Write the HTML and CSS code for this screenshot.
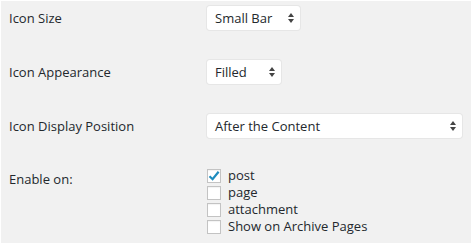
FILE: index.html
```html
<!DOCTYPE html>
<html>
  <head>
    <title>Icon Settings</title>
    <link rel="stylesheet" href="styles.css">
  </head>
  <body>
    <div class="panel">
      <div class="row">
        <div class="label">Icon Size</div>
        <div class="select size">
          <span>Small Bar</span>
          <svg class="arrows" width="6" height="10" viewBox="0 0 6 10"><path d="M3 0 L6 4 L0 4 Z M3 10 L6 6 L0 6 Z" fill="#444"/></svg>
        </div>
      </div>
      <div class="row">
        <div class="label">Icon Appearance</div>
        <div class="select look">
          <span>Filled</span>
          <svg class="arrows" width="6" height="10" viewBox="0 0 6 10"><path d="M3 0 L6 4 L0 4 Z M3 10 L6 6 L0 6 Z" fill="#444"/></svg>
        </div>
      </div>
      <div class="row">
        <div class="label">Icon Display Position</div>
        <div class="select place">
          <span>After the Content</span>
          <svg class="arrows" width="6" height="10" viewBox="0 0 6 10"><path d="M3 0 L6 4 L0 4 Z M3 10 L6 6 L0 6 Z" fill="#444"/></svg>
        </div>
      </div>
      <div class="row checks">
        <div class="label enable">Enable on:</div>
        <div class="checklist">
          <div class="check">
            <span class="box">
              <svg width="12" height="12" viewBox="0 0 12 12"><path d="M1.5 6.2 L4.6 9.2 L10.6 1.8" fill="none" stroke="#1e8cbe" stroke-width="2.2"/></svg>
            </span>
            <span>post</span>
          </div>
          <div class="check"><span class="box"></span><span>page</span></div>
          <div class="check"><span class="box"></span><span>attachment</span></div>
          <div class="check"><span class="box"></span><span>Show on Archive Pages</span></div>
        </div>
      </div>
    </div>
  </body>
</html>
```

FILE: styles.css
```css
body {
  margin: 0;
  background-color: #fff;
  font-family: "Open Sans", "Liberation Sans", sans-serif;
  color: #23282d;
}

.panel {
  background-color: #f1f1f1;
  margin: 1px 3px 2px 1px;
  height: 242px;
  padding: 5px 0 0 8px;
  box-sizing: border-box;
}

.row {
  display: flex;
  align-items: center;
  height: 24px;
  margin-bottom: 30px;
}

.label {
  width: 198px;
  font-size: 13px;
  font-weight: 500;
}

.select {
  display: flex;
  align-items: center;
  justify-content: space-between;
  height: 24px;
  box-sizing: border-box;
  padding: 0 6px 0 8px;
  background-color: #fff;
  border-radius: 3px;
  box-shadow: 0 0 0 1px #e6e6e6;
  font-size: 13px;
}

.size {
  width: 93px;
}

.look {
  width: 74px;
}

.place {
  width: 255px;
}

.checks {
  align-items: flex-start;
  height: auto;
}

.enable {
  line-height: 18px;
  padding-top: 2px;
}

.checklist {
  display: flex;
  flex-direction: column;
  margin-top: -1px;
}

.check {
  display: flex;
  align-items: center;
  height: 17px;
  line-height: 17px;
  font-size: 13px;
}

.box {
  width: 14px;
  height: 14px;
  box-sizing: border-box;
  border: 1px solid #c3c3c3;
  box-shadow: inset 0 1px 1px rgba(0, 0, 0, 0.05);
  background-color: #fff;
  margin-right: 7px;
  display: flex;
  align-items: center;
  justify-content: center;
}
```
